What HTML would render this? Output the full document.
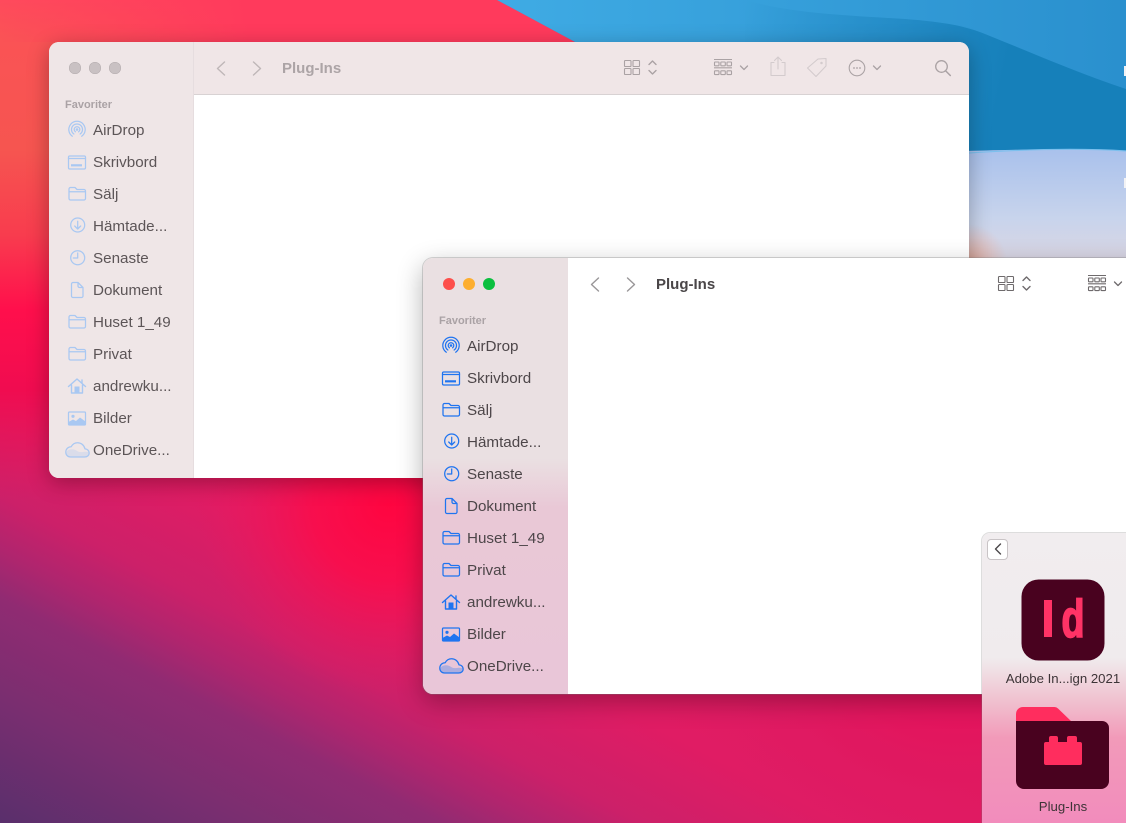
<!DOCTYPE html>
<html><head><meta charset="utf-8"><style>
html,body{margin:0;padding:0}
body{width:1126px;height:823px;overflow:hidden;position:relative;font-family:"Liberation Sans",sans-serif;background:#c8226c}
#bg{position:absolute;left:0;top:0}
.win{position:absolute;width:920px;height:436px;border-radius:10px;overflow:hidden;background:#fff}
.w1{left:49px;top:42px;box-shadow:0 5px 22px rgba(0,0,0,.3)}
.w2{left:423px;top:258px;box-shadow:0 0 0 1px rgba(120,120,120,.3),0 8px 26px rgba(0,0,0,.3)}
.side{position:absolute;left:0;top:0;width:144px;height:436px}
.w1 .side{background:#efe6e7;border-right:1px solid #e6dddf}
.w2 .side{width:145px;background:linear-gradient(#eae0e2 0,#eae0e2 200px,#e9c8d6 250px,#e9c6d8 436px)}
.bar{position:absolute;left:145px;top:0;right:0;height:52px}
.w1 .bar{background:#f0e6e7;border-bottom:1px solid #d8d2d3}
.dot{position:absolute;top:20px;width:12px;height:12px;border-radius:50%}
.w1 .dot{background:#c9c1c3;box-shadow:inset 0 0 0 .5px #b3abad}
.fav{position:absolute;left:16px;top:56px;font-size:11px;font-weight:bold;color:#aaa2a5}
.row{position:absolute;left:44px;margin-top:1px;font-size:15.2px;line-height:20px;white-space:nowrap;color:#5c5557}
.w2 .row{color:#4d4649}
.title{position:absolute;left:233px;top:17px;font-size:15px;font-weight:bold;line-height:20px;color:#aca4a6}
.w2 .title{color:#4a4648}
svg.ic{position:absolute;left:0;top:0;overflow:visible}
.panel{position:absolute;left:982px;top:533px;width:144px;height:290px;border-radius:8px 0 0 0;background:linear-gradient(#f1edef 0,#f0ebed 125px,#f0c4d1 165px,#f29ab9 205px,#f28cbc 290px);box-shadow:0 0 0 1px rgba(120,120,120,.25)}
.cap{position:absolute;left:0;width:162px;text-align:center;font-size:13.2px;color:#3d3437;white-space:nowrap}
.tick{position:absolute;left:1124px;width:2px;height:10px;background:#f2f2f4}
</style></head><body>
<svg id="bg" width="1126" height="823" viewBox="0 0 1126 823">
<defs>
<linearGradient id="lin" gradientUnits="userSpaceOnUse" x1="-114" y1="222" x2="-341" y2="667"><stop offset="0" stop-color="#e41a60"/><stop offset=".2" stop-color="#e01c64"/><stop offset=".386" stop-color="#cc2069"/><stop offset=".48" stop-color="#b0256e"/><stop offset=".568" stop-color="#902b72"/><stop offset=".742" stop-color="#7a2e70"/><stop offset=".964" stop-color="#5a2f6c"/></linearGradient>
<linearGradient id="top" x1="0" y1="0" x2="0" y2="1"><stop offset="0" stop-color="#ff4a5c"/><stop offset=".08" stop-color="#fa5355"/><stop offset=".3" stop-color="#f65550"/><stop offset=".47" stop-color="#f83c4e"/><stop offset=".62" stop-color="#ff0f4c"/><stop offset=".78" stop-color="#f00c50"/><stop offset="1" stop-color="#e0185a" stop-opacity="0"/></linearGradient>
<linearGradient id="tophz" gradientUnits="userSpaceOnUse" x1="0" y1="0" x2="250" y2="0"><stop offset="0" stop-color="#ff3a5c" stop-opacity="0"/><stop offset="1" stop-color="#ff3a5c"/></linearGradient>
<radialGradient id="rd" gradientUnits="userSpaceOnUse" cx="388" cy="505" r="190"><stop offset="0" stop-color="#ff0540"/><stop offset=".4" stop-color="#fb0c4a" stop-opacity=".85"/><stop offset="1" stop-color="#e81a60" stop-opacity="0"/></radialGradient>
<radialGradient id="rb" gradientUnits="userSpaceOnUse" cx="960" cy="580" r="300"><stop offset="0" stop-color="#f00a55"/><stop offset=".6" stop-color="#e0175f" stop-opacity=".8"/><stop offset="1" stop-color="#d81c66" stop-opacity="0"/></radialGradient>
<linearGradient id="blue" gradientUnits="userSpaceOnUse" x1="500" y1="0" x2="1126" y2="0"><stop offset="0" stop-color="#3fabe4"/><stop offset="1" stop-color="#2a90ce"/></linearGradient>
<linearGradient id="blue2" gradientUnits="userSpaceOnUse" x1="745" y1="0" x2="1010" y2="60"><stop offset="0" stop-color="#1a82bc" stop-opacity="0"/><stop offset=".6" stop-color="#1a82bc" stop-opacity=".6"/><stop offset="1" stop-color="#1680ba"/></linearGradient>
<linearGradient id="sky" x1="0" y1="0" x2="0" y2="1"><stop offset="0" stop-color="#a9c1ec"/><stop offset=".6" stop-color="#c8d4ec"/><stop offset="1" stop-color="#dcd6e2"/></linearGradient>
<radialGradient id="peach" gradientUnits="userSpaceOnUse" cx="969" cy="262" r="38"><stop offset="0" stop-color="#e8ae9e"/><stop offset="1" stop-color="#e8b0a4" stop-opacity="0"/></radialGradient>
</defs>
<rect width="1126" height="823" fill="url(#lin)"/>
<rect x="0" y="0" width="423" height="500" fill="url(#top)"/>
<rect x="198" y="315" width="380" height="380" fill="url(#rd)"/>
<rect x="660" y="280" width="466" height="543" fill="url(#rb)"/>
<path d="M0 0H497L575 42H0Z" fill="url(#tophz)"/>
<path d="M497 0H1126V270H900V42H575Z" fill="url(#blue)"/>
<path d="M745 0C790 13 840 15 905 19C945 22 965 26 985 34C1030 52 1075 72 1126 89V160H745Z" fill="url(#blue2)"/>
<path d="M900 153C1030 149 1080 148 1126 151V265H900Z" fill="url(#sky)"/>
<path d="M969 153C1030 149 1080 148 1126 151" fill="none" stroke="#7cc0ee" stroke-width="1.2"/>
<rect x="931" y="224" width="76" height="41" fill="url(#peach)"/>
</svg>
<div class="tick" style="top:66px"></div>
<div class="tick" style="top:178px"></div>

<svg width="0" height="0" style="position:absolute"><defs>
<g id="side" fill="none" stroke="currentColor" stroke-width="1.25" stroke-linecap="round" stroke-linejoin="round">
<g>
<circle cx="28" cy="87.5" r="1.3" fill="currentColor" stroke="none"/>
<path d="M26.400 89.800A2.800 2.800 0 1 1 29.600 89.800M24.850 92A5.500 5.500 0 1 1 31.150 92M23.300 94.200A8.200 8.200 0 1 1 32.700 94.200"/>
</g>
<g><rect x="19.500" y="114" width="17" height="13" rx="1.200"/><path d="M19.500 116.500H36.500"/><path d="M22 123.300H33" stroke-width="2.200" stroke-linecap="butt"/></g>
<g id="fold1"><path d="M20 147a1.500 1.500 0 0 1 1.500-1.500h4.500l2 2h7a1.500 1.500 0 0 1 1.500 1.500v7.500a1.500 1.500 0 0 1-1.500 1.500H21.500a1.500 1.500 0 0 1-1.500-1.500zM20 149.700H36.500"/></g>
<g><circle cx="28.700" cy="183" r="7"/><path d="M28.700 179.200V186.800M25.700 184l3 3 3-3"/></g>
<g><circle cx="28.700" cy="215.700" r="7"/><path d="M28.700 211V216H24.300"/></g>
<g><path d="M24 240.500h5l5 5v8.500a1.500 1.500 0 0 1-1.500 1.500H24a1.500 1.500 0 0 1-1.500-1.500V242A1.500 1.500 0 0 1 24 240.500zM29 240.500v3.500a1.500 1.500 0 0 0 1.500 1.500H34"/></g>
<use href="#fold1" y="128"/>
<use href="#fold1" y="160"/>
<g><path d="M19.500 344.500L28 337l8.500 7.500M22.500 343v8h11v-8M33 338v3" stroke-width="1.400"/><rect x="25.500" y="344.500" width="5" height="6.500" fill="currentColor" stroke="none"/></g>
<g><rect x="19.500" y="370" width="17" height="13" rx="1"/><circle cx="24" cy="374.300" r="1.600" fill="currentColor" stroke="none"/><path d="M19.500 383v-3l4.500-2.500 3 1.500 4-3.500 5.500 4v3.500z" fill="currentColor" stroke="none"/></g>
<g><path d="M21.500 415h14c2.800 0 4.700-1.700 4.700-4s-1.900-4-4.200-4.100c-.9-3.700-3.900-6.200-7.400-6.200-2.800 0-5.200 1.600-6.400 4-3.200-.1-5.400 2.700-5.400 5.400 0 2.800 1.900 4.900 4.700 4.900z"/><path d="M18 409c4-3 8-1.500 11 .5 3 1.500 6-.5 10.500.5.500 1.500.5 3-1 4l-3 1H21c-3.500 0-4-3.500-3-6z" fill="currentColor" stroke="none" opacity=".3"/></g>
</g>
<g id="tbar" fill="none" stroke="currentColor" stroke-width="1.1">
<path d="M175.500 20L168.500 26.500L175.500 33M204.500 20L211.500 26.500L204.500 33" stroke-width="1.400" stroke-linecap="round" stroke-linejoin="round" opacity=".7"/>
<rect x="575.500" y="18.500" width="6.500" height="6" rx=".8"/><rect x="584" y="18.500" width="6.500" height="6" rx=".8"/><rect x="575.500" y="26.500" width="6.500" height="6" rx=".8"/><rect x="584" y="26.500" width="6.500" height="6" rx=".8"/>
<path d="M600 22.500l3.500-3.500 3.500 3.500M600 28.500l3.500 3.500 3.500-3.500" stroke-width="1.400" stroke-linecap="round" stroke-linejoin="round"/>
<path d="M665 17.500H683M665 25.800H683"/>
<rect x="665.500" y="20" width="4.500" height="3.800" rx=".6"/><rect x="671.800" y="20" width="4.500" height="3.800" rx=".6"/><rect x="678" y="20" width="4.500" height="3.800" rx=".6"/>
<rect x="665.500" y="28.800" width="4.500" height="3.800" rx=".6"/><rect x="671.800" y="28.800" width="4.500" height="3.800" rx=".6"/><rect x="678" y="28.800" width="4.500" height="3.800" rx=".6"/>
<path d="M691.500 24l3.500 3.500 3.500-3.500" stroke-width="1.300" stroke-linecap="round" stroke-linejoin="round"/>
</g>
</defs></svg>

<div class="win w1">
<div class="side">
<div class="dot" style="left:20px"></div><div class="dot" style="left:40px"></div><div class="dot" style="left:60px"></div>
<div class="fav" style="top:57px">Favoriter</div>
<svg class="ic" width="144" height="436" style="color:#a9c8f2"><use href="#side"/></svg>
<div class="row" style="top:78px">AirDrop</div><div class="row" style="top:110px">Skrivbord</div><div class="row" style="top:142px">Sälj</div><div class="row" style="top:174px">Hämtade...</div><div class="row" style="top:206px">Senaste</div><div class="row" style="top:238px">Dokument</div><div class="row" style="top:270px">Huset 1_49</div><div class="row" style="top:302px">Privat</div><div class="row" style="top:334px">andrewku...</div><div class="row" style="top:366px">Bilder</div><div class="row" style="top:398px">OneDrive...</div>
</div>
<div class="bar"></div>
<svg class="ic" width="920" height="60" style="color:#aaa2a4"><use href="#tbar"/>
<g fill="none" stroke="#d3cbcd" stroke-width="1.1" stroke-linejoin="round" stroke-linecap="round">
<path d="M725 20.500h-3v13h14v-13h-3M729 27V15.500M725.500 18.500l3.500-3.500 3.500 3.500"/>
<path d="M758.500 26L769 17L777 16.500L777 24L767 34.500Z"/><circle cx="772.500" cy="21" r=".7" fill="#d3cbcd"/>
</g>
<g fill="none" stroke="#aaa2a4" stroke-width="1.100" stroke-linecap="round" stroke-linejoin="round">
<circle cx="808" cy="26" r="7.800"/><path d="M824.500 24l3.500 3.500 3.500-3.500" stroke-width="1.300"/>
<circle cx="892.500" cy="24.500" r="5.800" stroke-width="1.300"/><path d="M896.800 29l4.500 4.500" stroke-width="1.500"/>
</g>
<g fill="#aaa2a4"><circle cx="805" cy="26" r=".9"/><circle cx="808" cy="26" r=".9"/><circle cx="811" cy="26" r=".9"/></g>
</svg>
<div class="title">Plug-Ins</div>
</div>

<div class="win w2">
<div class="side">
<div class="dot" style="left:20px;background:#fd4f4b"></div><div class="dot" style="left:40px;background:#fdae2f"></div><div class="dot" style="left:60px;background:#0cbf3f"></div>
<div class="fav" style="top:57px">Favoriter</div>
<svg class="ic" width="144" height="436" style="color:#1f74f0"><use href="#side"/></svg>
<div class="row" style="top:78px">AirDrop</div><div class="row" style="top:110px">Skrivbord</div><div class="row" style="top:142px">Sälj</div><div class="row" style="top:174px">Hämtade...</div><div class="row" style="top:206px">Senaste</div><div class="row" style="top:238px">Dokument</div><div class="row" style="top:270px">Huset 1_49</div><div class="row" style="top:302px">Privat</div><div class="row" style="top:334px">andrewku...</div><div class="row" style="top:366px">Bilder</div><div class="row" style="top:398px">OneDrive...</div>
</div>
<svg class="ic" width="920" height="60" style="color:#6e6a6c"><use href="#tbar"/></svg>
<div class="title">Plug-Ins</div>
</div>

<div class="panel">
<div style="position:absolute;left:5px;top:6px;width:19px;height:19px;background:#fff;border:1px solid #c9c4c6;border-radius:4px"></div>
<svg class="ic" width="144" height="290">
<path d="M18.500 11L13.500 16l5 5" fill="none" stroke="#4a4648" stroke-width="1.400" stroke-linecap="round" stroke-linejoin="round"/>
<rect x="39.500" y="46.500" width="83" height="81" rx="17" fill="#49021f"/>
<rect x="62" y="67" width="8" height="37" fill="#ff3366"/>
<text x="79.500" y="104" font-family="Liberation Sans" font-size="53" font-weight="bold" fill="#ff3366" stroke="#ff3366" stroke-width="1.800" textLength="23" lengthAdjust="spacingAndGlyphs">d</text>
<path d="M34 189v-8a7 7 0 0 1 7-7h31a5 5 0 0 1 4 1.500L90 189z" fill="#ff2d5e"/>
<path d="M34 188h86a7 7 0 0 1 7 7v53a8 8 0 0 1-8 8H42a8 8 0 0 1-8-8z" fill="#49021f"/>
<path d="M62 211a2 2 0 0 1 2-2h3v-4a2 2 0 0 1 2-2h5a2 2 0 0 1 2 2v4h9v-4a2 2 0 0 1 2-2h6a2 2 0 0 1 2 2v4h3a2 2 0 0 1 2 2v19a2 2 0 0 1-2 2H64a2 2 0 0 1-2-2z" fill="#ff2d5e"/>
</svg>
<div class="cap" style="top:138px">Adobe In...ign 2021</div>
<div class="cap" style="top:266px;width:162px">Plug-Ins</div>
</div>
</body></html>
